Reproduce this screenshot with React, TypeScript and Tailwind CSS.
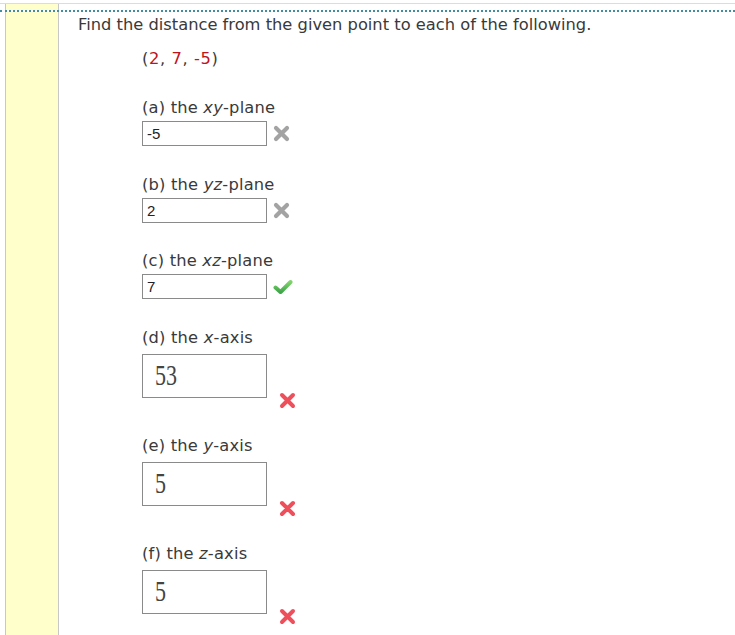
const sans = "font-['DejaVu_Sans','Liberation_Sans',sans-serif]";

function GrayX() {
  return (
    <svg width="17" height="17" viewBox="0 0 17 17" className="shrink-0">
      <path d="M3 3 L14 14 M14 3 L3 14" stroke="#a3a3a3" strokeWidth="4.2" strokeLinecap="round" />
    </svg>
  );
}

function RedX() {
  return (
    <svg width="17" height="17" viewBox="0 0 17 17" className="shrink-0">
      <path d="M3 3 L14 14 M14 3 L3 14" stroke="#ee4f5b" strokeWidth="4" strokeLinecap="round" />
    </svg>
  );
}

function Check() {
  return (
    <svg width="20" height="16" viewBox="0 0 20 16" className="shrink-0">
      <defs>
        <linearGradient id="chk" x1="0" y1="0" x2="0" y2="1">
          <stop offset="0" stopColor="#7fd36b" />
          <stop offset="1" stopColor="#3fa64a" />
        </linearGradient>
      </defs>
      <path d="M2.5 8.5 L7.5 13 L17.5 3" fill="none" stroke="url(#chk)" strokeWidth="4" strokeLinecap="round" strokeLinejoin="round" />
    </svg>
  );
}

function SmallPart({ label, value, icon, mt }: { label: React.ReactNode; value: string; icon: React.ReactNode; mt: string }) {
  return (
    <div className={mt}>
      <div className="leading-[20px] tracking-[0.2px]">{label}</div>
      <div className="mt-[3px] flex items-center gap-[6px]">
        <div className="w-[125px] h-[25px] border border-[#8a8a8a] bg-white pl-[4px] text-[15px] leading-[23px] text-[#222] font-['Liberation_Sans',Arial,sans-serif]">
          {value}
        </div>
        {icon}
      </div>
    </div>
  );
}

function BigPart({ label, value, mt }: { label: React.ReactNode; value: string; mt: string }) {
  return (
    <div className={mt}>
      <div className="leading-[20px] tracking-[0.2px]">{label}</div>
      <div className="mt-[6px] flex items-start gap-[12px]">
        <div className="w-[125px] h-[44px] border border-[#8a8a8a] bg-white pl-[12px] flex items-center">
          <span className="inline-block scale-y-[1.35] text-[22px] text-[#444] font-['Liberation_Serif','Times_New_Roman',serif] leading-none">
            {value}
          </span>
        </div>
        <div className="mt-[38px]">
          <RedX />
        </div>
      </div>
    </div>
  );
}

export default function App() {
  return (
    <div className={`w-[735px] h-[635px] overflow-hidden bg-white text-[16.3px] text-[#3a3a3a] ${sans}`}>
      <div className="h-[3px] bg-white" />
      <div className="h-[7px] border-t border-[#dcdcdc] flex">
        <div className="ml-[5px] w-[54px] bg-[#ffffcc] border-x border-[#c8c8c8]" />
      </div>
      <div className="h-[2px] border-t-2 border-dotted border-[#3f8fa0]" />
      <div className="flex h-[640px]">
        <div className="ml-[5px] w-[54px] bg-[#ffffcc] border-x border-[#c8c8c8]" />
        <div className="pl-[19px]">
          <div className="mt-[3px] leading-[20px]">Find the distance from the given point to each of the following.</div>
          <div className="pl-[64px]">
            <div className="mt-[14px] leading-[20px] tracking-[0.6px]">
              (<span className="text-[#c0141c]">2</span>, <span className="text-[#c0141c]">7</span>, <span className="text-[#c0141c]">-5</span>)
            </div>
            <SmallPart mt="mt-[29px]" label={<>(a) the <i>xy</i>-plane</>} value="-5" icon={<GrayX />} />
            <SmallPart mt="mt-[29px]" label={<>(b) the <i>yz</i>-plane</>} value="2" icon={<GrayX />} />
            <SmallPart mt="mt-[28px]" label={<>(c) the <i>xz</i>-plane</>} value="7" icon={<Check />} />
            <BigPart mt="mt-[29px]" label={<>(d) the <i>x</i>-axis</>} value="53" />
            <BigPart mt="mt-[27px]" label={<>(e) the <i>y</i>-axis</>} value="5" />
            <BigPart mt="mt-[27px]" label={<>(f) the <i>z</i>-axis</>} value="5" />
          </div>
        </div>
      </div>
    </div>
  );
}
